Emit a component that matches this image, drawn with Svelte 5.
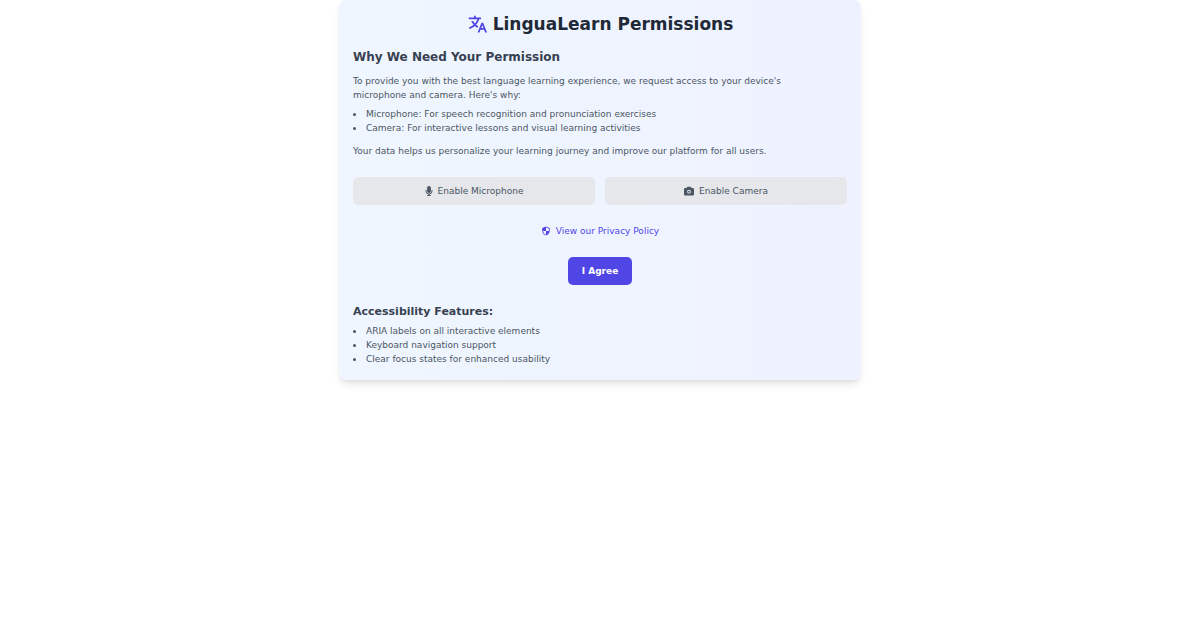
<script>
    const reasons = [
        "Microphone: For speech recognition and pronunciation exercises",
        "Camera: For interactive lessons and visual learning activities",
    ];

    const features = [
        "ARIA labels on all interactive elements",
        "Keyboard navigation support",
        "Clear focus states for enhanced usability",
    ];

    let microphone = $state(false);
    let camera = $state(false);
    let agreed = $state(false);
</script>

<main class="card">
    <h1>
        <svg class="logo" viewBox="0 0 24 24" aria-hidden="true">
            <path
                d="M18.5 10L22.9 21H20.745L19.544 18H15.454L14.255 21H12.101L16.5 10H18.5ZM10 2V4H16V6L14.032 6C13.242 8.366 11.999 10.506 10.411 12.301C11.134 12.946 11.917 13.518 12.748 14.008L11.997 15.886C10.924 15.278 9.919 14.552 9 13.725C7.214 15.332 5.109 16.555 2.799 17.273L2.263 15.344C4.239 14.72 6.045 13.674 7.59 12.302C6.463 11.028 5.509 9.58 4.767 8L7.007 8C7.57 9.039 8.24 10.003 9 10.877C10.228 9.465 11.22 7.816 11.91 6L2 6V4H8V2H10ZM17.5 12.885L16.253 16H18.745L17.5 12.885Z"
            />
        </svg>
        LinguaLearn Permissions
    </h1>

    <section>
        <h2>Why We Need Your Permission</h2>
        <p>
            To provide you with the best language learning experience, we request access to your device's microphone
            and camera. Here's why:
        </p>
        <ul>
            {#each reasons as reason}
                <li>{reason}</li>
            {/each}
        </ul>
        <p class="note">Your data helps us personalize your learning journey and improve our platform for all users.</p>
    </section>

    <div class="permissions">
        <button class="toggle" aria-pressed={microphone} onclick={() => (microphone = !microphone)}>
            <svg class="mic" viewBox="0 0 384 512" aria-hidden="true">
                <path
                    d="M192 0C139 0 96 43 96 96V256c0 53 43 96 96 96s96-43 96-96V96c0-53-43-96-96-96zM64 216c0-13-11-24-24-24s-24 11-24 24v40c0 89 66 163 152 174v34H120c-13 0-24 11-24 24s11 24 24 24H264c13 0 24-11 24-24s-11-24-24-24H216V430c86-11 152-85 152-174V216c0-13-11-24-24-24s-24 11-24 24v40c0 71-57 128-128 128S64 327 64 256V216z"
                />
            </svg>
            Enable Microphone
        </button>
        <button class="toggle" aria-pressed={camera} onclick={() => (camera = !camera)}>
            <svg class="icon" viewBox="0 0 512 512" aria-hidden="true">
                <path
                    d="M149 65L139 96H64C29 96 0 125 0 160V416c0 35 29 64 64 64H448c35 0 64-29 64-64V160c0-35-29-64-64-64H373L363 65C356 45 338 32 317 32H195c-21 0-39 13-46 33zM256 192a96 96 0 1 1 0 192 96 96 0 1 1 0-192z"
                />
                <circle cx="256" cy="288" r="48" />
            </svg>
            Enable Camera
        </button>
    </div>

    <a class="policy" href="#privacy">
        <svg class="icon" viewBox="0 0 24 24" aria-hidden="true">
            <path
                fill-rule="evenodd"
                d="M12 1L3 5v6c0 5.5 3.8 10.7 9 12 5.2-1.3 9-6.5 9-12V5l-9-4zm0 11H5c.5 4.1 3.3 7.8 7 8.9V12h7V6.300l-7-3.100V12z"
            />
        </svg>
        View our Privacy Policy
    </a>

    <button class="agree" aria-pressed={agreed} onclick={() => (agreed = true)}>I Agree</button>

    <section>
        <h3>Accessibility Features:</h3>
        <ul>
            {#each features as feature}
                <li>{feature}</li>
            {/each}
        </ul>
    </section>
</main>

<style>
    :global(body) {
        min-height: 100vh;
        background: #fff;
    }

    .card {
        display: flex;
        flex-direction: column;
        box-sizing: border-box;
        max-width: 522px;
        margin: 0 auto;
        padding: 14px;
        border-radius: 7px;
        background: linear-gradient(to right, #eff6ff, #eef2ff);
        box-shadow: 0 6px 9px -2px rgba(0, 0, 0, 0.1), 0 2px 4px -2px rgba(0, 0, 0, 0.1);
        color: #4b5563;
        font-family: "DejaVu Sans", sans-serif;
        font-size: 9px;
        line-height: 14px;
    }

    svg {
        flex-shrink: 0;
        fill: currentColor;
    }

    h1,
    h2,
    h3,
    p,
    ul {
        margin: 0;
    }

    h1 {
        display: flex;
        align-items: center;
        justify-content: center;
        gap: 5px;
        margin-bottom: 14px;
        color: #1f2937;
        font-size: 17px;
        line-height: 21px;
    }

    .logo {
        width: 21px;
        height: 21px;
        color: #4f46e5;
    }

    h2 {
        margin-bottom: 9px;
        color: #374151;
        font-size: 12px;
        line-height: 16px;
    }

    h3 {
        margin-bottom: 4px;
        color: #374151;
        font-size: 11px;
        line-height: 16px;
    }

    p {
        padding-right: 14px;
    }

    ul {
        padding: 0;
        list-style: disc inside;
    }

    p + ul {
        margin-top: 5px;
    }

    .note {
        margin-top: 9px;
    }

    .permissions {
        display: grid;
        grid-template-columns: 1fr 1fr;
        gap: 10px;
        margin: 19px 0;
    }

    button {
        border: none;
        border-radius: 5px;
        padding: 7px 14px;
        font: inherit;
        cursor: pointer;
    }

    .toggle {
        display: flex;
        align-items: center;
        justify-content: center;
        gap: 5px;
        background: #e5e7eb;
        color: #4b5563;
    }

    .toggle[aria-pressed="true"] {
        background: #22c55e;
        color: #fff;
    }

    .mic {
        width: 8px;
        height: 10px;
    }

    .icon {
        width: 10px;
        height: 10px;
    }

    .policy {
        display: flex;
        align-items: center;
        align-self: center;
        gap: 5px;
        color: #4f46e5;
        text-decoration: none;
    }

    .policy:hover {
        text-decoration: underline;
    }

    .agree {
        align-self: center;
        margin: 19px 0;
        background: #4f46e5;
        color: #fff;
        font-weight: bold;
    }

    .agree:hover {
        background: #4338ca;
    }

    button:focus-visible,
    a:focus-visible {
        outline: 2px solid #6366f1;
        outline-offset: 2px;
    }
</style>
